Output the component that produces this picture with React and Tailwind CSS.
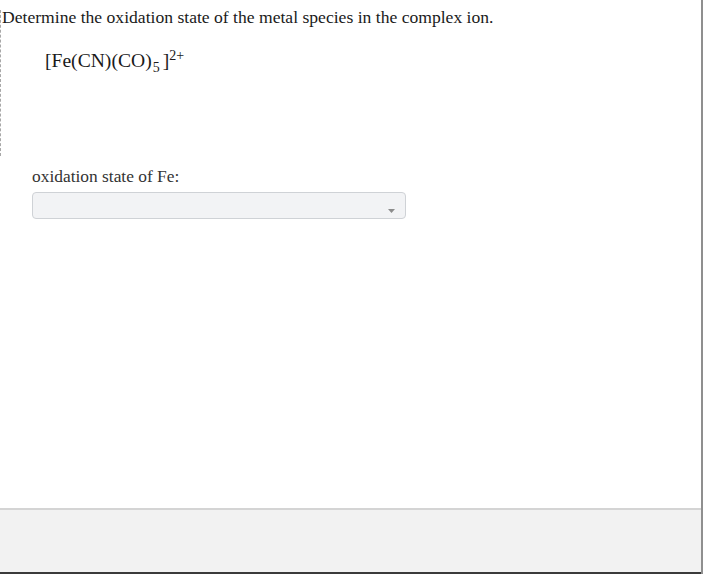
import React from "react";

export default function App() {
  return (
    <div className="w-[703px] h-[574px] bg-white flex flex-col overflow-hidden" style={{ fontFamily: '"Liberation Serif", "Times New Roman", serif' }}>
      <div className="flex flex-1 min-h-0">
        <div className="flex-1 flex flex-col relative">
          <div className="absolute left-0 top-[10px] h-[146px] border-l border-dashed border-[#a8a8a8]" />
          <div className="pl-[2px] pt-[7px] text-[17.6px] leading-[20px] text-[#1a1a1a] whitespace-nowrap">
            Determine the oxidation state of the metal species in the complex ion.
          </div>
          <div className="pl-[45px] pt-[22px] text-[19.6px] leading-[24px] text-[#1a1a1a] whitespace-nowrap">
            <span>[Fe(CN)(CO)</span>
            <span className="relative top-[5px] text-[14px] ml-[1px]">5</span>
            <span className="ml-[3px]">]</span>
            <span className="relative top-[-7px] text-[14px]">2+</span>
          </div>
          <div className="pl-[32px] pt-[91px] text-[17.4px] leading-[20px] text-[#333333] whitespace-nowrap">
            oxidation state of Fe:
          </div>
          <div className="pl-[32px] pt-[6px]">
            <div className="w-[374px] h-[27px] bg-[#f2f3f5] border border-[#cfd2d6] rounded-[4px] flex items-center justify-end pr-[10px]">
              <svg width="7" height="4" viewBox="0 0 7 4" className="mt-[10px]">
                <polygon points="0,0 7,0 3.5,4" fill="#8c8c8c" />
              </svg>
            </div>
          </div>
          <div className="flex-1" />
        </div>
        <div className="w-[2px] bg-[#8f8f8f]" />
      </div>
      <div className="h-[66px] flex">
        <div className="flex-1 flex flex-col">
          <div className="h-[2px] bg-[#d4d4d4]" />
          <div className="flex-1 bg-[#f2f2f2]" />
          <div className="h-[2px] bg-[#3a3a3a]" />
        </div>
        <div className="w-[2px] bg-[#8f8f8f]" />
      </div>
    </div>
  );
}
